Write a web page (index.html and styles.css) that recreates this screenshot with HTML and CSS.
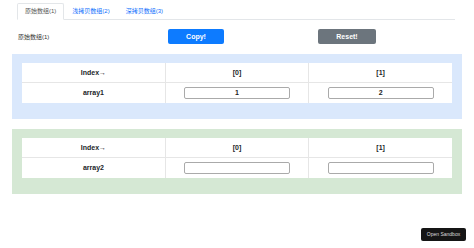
FILE: index.html
```html
<!DOCTYPE html>
<html lang="zh">

<head>
  <meta charset="UTF-8">
  <meta name="viewport" content="width=device-width, initial-scale=1.0">
  <title>数组拷贝</title>
  <link rel="stylesheet" href="styles.css">
</head>

<body>
  <ul class="tabs">
    <li class="tab active"><a href="#">原始数组(1)</a></li>
    <li class="tab"><a href="#">浅拷贝数组(2)</a></li>
    <li class="tab"><a href="#">深拷贝数组(3)</a></li>
  </ul>

  <div class="toolbar">
    <span class="label">原始数组(1)</span>
    <button class="btn btn-copy">Copy!</button>
    <button class="btn btn-reset">Reset!</button>
  </div>

  <!-- 第一組：有值 -->
  <div class="panel panel-blue">
    <table class="grid">
      <tr class="head">
        <th>Index→</th>
        <th>[0]</th>
        <th>[1]</th>
      </tr>
      <tr>
        <th>array1</th>
        <td><input type="text" value="1"></td>
        <td><input type="text" value="2"></td>
      </tr>
    </table>
  </div>

  <!-- 第二組：空的 -->
  <div class="panel panel-green">
    <table class="grid">
      <tr class="head">
        <th>Index→</th>
        <th>[0]</th>
        <th>[1]</th>
      </tr>
      <tr>
        <th>array2</th>
        <td><input type="text" value=""></td>
        <td><input type="text" value=""></td>
      </tr>
    </table>
  </div>

  <a class="sandbox" href="#">Open Sandbox</a>
</body>

</html>
```

FILE: styles.css
```css
* {
  box-sizing: border-box;
}

body {
  margin: 0;
  font-family: "Liberation Sans", "Noto Sans CJK SC", sans-serif;
  font-size: 7px;
  color: #212529;
  background: #fff;
}

/* 頁籤 */
.tabs {
  list-style: none;
  margin: 3px 19px 0 17px;
  padding: 0;
  display: flex;
  border-bottom: 1px solid #e3e6e9;
}

.tab a {
  display: block;
  padding: 0 7px;
  line-height: 15px;
  font-size: 6px;
  color: #0d6efd;
  text-decoration: none;
  border: 1px solid transparent;
  margin-bottom: -1px;
}

.tab.active a {
  color: #555;
  background: #fff;
  border-color: #e3e6e9 #e3e6e9 #fff;
  border-radius: 2px 2px 0 0;
}

/* 按鈕列 */
.toolbar {
  display: grid;
  grid-template-columns: 150px 150px auto;
  align-items: center;
  padding-left: 18px;
  margin-top: 9px;
}

.label {
  font-size: 6px;
  color: #333;
}

.btn {
  height: 15px;
  border: none;
  border-radius: 2px;
  color: #fff;
  font-family: inherit;
  font-size: 7px;
  font-weight: bold;
  padding: 0;
}

.btn-copy {
  width: 56px;
  background: #0d7bff;
}

.btn-reset {
  width: 58px;
  background: #6c757d;
}

/* 區塊 */
.panel {
  margin: 10px 12px 0;
  padding: 9px 10px 16px;
}

.panel-blue {
  background: #dae8fc;
}

.panel-green {
  background: #d5e8d4;
}

.grid {
  width: 100%;
  border-collapse: collapse;
  background: #fff;
  table-layout: fixed;
}

.grid th,
.grid td {
  text-align: center;
  font-size: 7px;
  font-weight: bold;
  border: 1px solid #e6e6e6;
  padding: 0;
  height: 21px;
}

.grid tr.head th {
  height: 19px;
}

.grid tr:first-child th {
  border-top: none;
}

.grid tr:last-child th,
.grid tr:last-child td {
  border-bottom: none;
}

.grid th:first-child {
  border-left: none;
}

.grid td:last-child,
.grid th:last-child {
  border-right: none;
}

.grid input {
  width: 106px;
  height: 12px;
  border: 1px solid #aaa;
  border-radius: 2px;
  text-align: center;
  font-family: inherit;
  font-size: 7px;
  font-weight: bold;
  color: #222;
  padding: 0;
}

/* 右下角浮動按鈕 */
.sandbox {
  position: fixed;
  right: 8px;
  bottom: 7px;
  width: 45px;
  height: 13px;
  line-height: 13px;
  text-align: center;
  background: #151515;
  color: #ddd;
  border-radius: 2px;
  font-size: 5px;
  text-decoration: none;
}
```
